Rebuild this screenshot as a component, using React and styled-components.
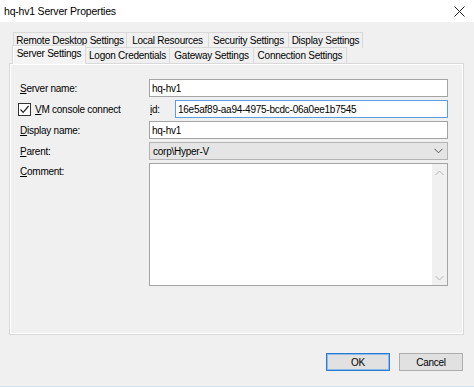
import styled, { createGlobalStyle } from 'styled-components'

const GlobalStyle = createGlobalStyle`
	body {
		margin: 0;
		font-family: 'Liberation Sans', Arial, sans-serif;
		font-size: 10px;
		letter-spacing: -0.25px;
		color: #000;
		background: #f0f0f0;
	}
`

// tab widths measured from the dialog
const topTabs = [
	{ label: 'Remote Desktop Settings', width: 114 },
	{ label: 'Local Resources', width: 83 },
	{ label: 'Security Settings', width: 81 },
	{ label: 'Display Settings', width: 75 },
]
const frontTabs = [
	{ label: 'Server Settings', width: 74 },
	{ label: 'Logon Credentials', width: 85 },
	{ label: 'Gateway Settings', width: 85 },
	{ label: 'Connection Settings', width: 94 },
]

function App() {
	return (
		<>
			<GlobalStyle />
			<Window>
				<TitleBar>
					<Title>hq-hv1 Server Properties</Title>
					<svg width="11" height="11" viewBox="0 0 11 11">
						<path d="M0.5 0.5 L10.5 10.5 M10.5 0.5 L0.5 10.5" stroke="#222" strokeWidth="1" />
					</svg>
				</TitleBar>
				<Content>
					<TabRow>
						{topTabs.map(t => (
							<Tab key={t.label} w={t.width}>
								{t.label}
							</Tab>
						))}
					</TabRow>
					<TabRow front>
						{frontTabs.map((t, i) => (
							<Tab key={t.label} w={t.width} selected={i === 0}>
								{t.label}
							</Tab>
						))}
					</TabRow>
					<Panel>
						<Form>
							<Label>
								<Key>S</Key>erver name:
							</Label>
							<Input defaultValue="hq-hv1" />

							<CheckLabel>
								<Check>
									<svg width="11" height="11" viewBox="0 0 11 11">
										<path d="M1.5 5.5 L4.2 8.3 L9.6 2" stroke="#222" strokeWidth="1.2" fill="none" />
									</svg>
								</Check>
								<span>
									<Key>V</Key>M console connect
								</span>
							</CheckLabel>
							<IdCell>
								<IdLabel>
									<Key>i</Key>d:
								</IdLabel>
								<Input focused defaultValue="16e5af89-aa94-4975-bcdc-06a0ee1b7545" />
							</IdCell>

							<Label>
								<Key>D</Key>isplay name:
							</Label>
							<Input defaultValue="hq-hv1" />

							<Label>
								<Key>P</Key>arent:
							</Label>
							<Select>
								<span>corp\Hyper-V</span>
								<svg width="9" height="6" viewBox="0 0 9 6">
									<path d="M0.5 0.8 L4.5 4.8 L8.5 0.8" stroke="#555" fill="none" />
								</svg>
							</Select>

							<Label top>
								<Key>C</Key>omment:
							</Label>
							<TextBox>
								<TextArea />
								<ScrollBar>
									<svg width="9" height="6" viewBox="0 0 9 6">
										<path d="M0.5 5 L4.5 1 L8.5 5" stroke="#b5b5b5" fill="none" />
									</svg>
									<svg width="9" height="6" viewBox="0 0 9 6">
										<path d="M0.5 1 L4.5 5 L8.5 1" stroke="#b5b5b5" fill="none" />
									</svg>
								</ScrollBar>
							</TextBox>
						</Form>
					</Panel>
					<Buttons>
						<Button primary>OK</Button>
						<Button>Cancel</Button>
					</Buttons>
				</Content>
			</Window>
		</>
	)
}
export default App

const Window = styled.div`
	width: 474px;
	height: 387px;
	display: flex;
	flex-direction: column;
	background: #f0f0f0;
	box-sizing: border-box;
	border-bottom: 1px solid #cfe0f2;
`
const TitleBar = styled.div`
	height: 22px;
	background: #fff;
	display: flex;
	align-items: center;
	justify-content: space-between;
	padding: 0 9px 0 4px;
	box-sizing: border-box;
`
const Title = styled.div`
	font-size: 10.5px;
	letter-spacing: -0.2px;
`
const Content = styled.div`
	flex: 1;
	display: flex;
	flex-direction: column;
	padding: 10px 10px 0 9px;
`
const TabRow = styled.div`
	display: flex;
	height: 16px;
	padding-left: 4px;
	margin-top: ${p => (p.front ? '-1px' : '0')};
	align-items: flex-end;
`
const Tab = styled.div`
	box-sizing: border-box;
	width: ${p => p.w}px;
	height: ${p => (p.selected ? '19px' : '16px')};
	margin: 0 0 ${p => (p.selected ? '-1px' : '0')} -1px;
	border: 1px solid #d9d9d9;
	border-bottom: none;
	background: ${p => (p.selected ? '#f4f4f4' : '#f0f0f0')};
	box-shadow: ${p => (p.selected ? 'inset 1px 1px 0 #fff' : 'none')};
	display: flex;
	justify-content: center;
	align-items: ${p => (p.selected ? 'flex-start' : 'center')};
	padding-top: ${p => (p.selected ? '2px' : '0')};
	white-space: nowrap;
	position: relative;
	z-index: ${p => (p.selected ? 1 : 0)};
	&:first-child {
		margin-left: ${p => (p.selected ? '-1px' : '0')};
	}
`
const Panel = styled.div`
	height: 272px;
	box-sizing: border-box;
	border: 1px solid #d9d9d9;
	box-shadow: inset 1px 1px 0 #fff, inset -1px -1px 0 #fff;
	padding: 15px 15px 0 10px;
`
const Form = styled.div`
	display: grid;
	grid-template-columns: 129px 1fr;
	grid-auto-rows: 18px;
	row-gap: 3px;
	align-items: center;
`
const Key = styled.u`
	text-underline-offset: 1px;
`
const Label = styled.div`
	align-self: ${p => (p.top ? 'start' : 'center')};
	padding-top: ${p => (p.top ? '3px' : '0')};
`
const Input = styled.input`
	box-sizing: border-box;
	height: 18px;
	width: 100%;
	min-width: 0;
	border: 1px solid ${p => (p.focused ? '#5b9fe3' : '#a4a4a4')};
	background: #fff;
	font: inherit;
	letter-spacing: inherit;
	padding: 0 2px;
	outline: none;
`
const CheckLabel = styled.label`
	display: flex;
	align-items: center;
	gap: 4px;
	margin-left: -2px;
`
const Check = styled.span`
	width: 13px;
	height: 13px;
	box-sizing: border-box;
	border: 1px solid #333;
	background: #fff;
	display: flex;
	align-items: center;
	justify-content: center;
`
const IdCell = styled.div`
	display: flex;
	align-items: center;
	margin-left: 1px;
`
const IdLabel = styled.div`
	width: 25px;
	flex: none;
`
const Select = styled.div`
	box-sizing: border-box;
	height: 18px;
	border: 1px solid #b4b4b4;
	background: #e5e5e5;
	display: flex;
	align-items: center;
	justify-content: space-between;
	padding: 0 4px 0 3px;
`
const TextBox = styled.div`
	height: 123px;
	align-self: start;
	box-sizing: border-box;
	border: 1px solid #a4a4a4;
	background: #fff;
	display: flex;
`
const TextArea = styled.textarea`
	flex: 1;
	border: none;
	resize: none;
	outline: none;
	font: inherit;
	padding: 2px;
`
const ScrollBar = styled.div`
	width: 15px;
	background: #f0f0f0;
	display: flex;
	flex-direction: column;
	justify-content: space-between;
	align-items: center;
	padding: 6px 0 4px;
`
const Buttons = styled.div`
	display: flex;
	justify-content: flex-end;
	gap: 9px;
	margin-top: 18px;
	padding-right: 1px;
`
const Button = styled.button`
	width: 64px;
	height: 18px;
	box-sizing: border-box;
	border: 1px solid ${p => (p.primary ? '#2b7bd3' : '#adadad')};
	box-shadow: ${p => (p.primary ? 'inset 0 0 0 1px #8cbbea' : 'none')};
	background: #e1e1e1;
	font: inherit;
	letter-spacing: inherit;
	padding: 0;
`
